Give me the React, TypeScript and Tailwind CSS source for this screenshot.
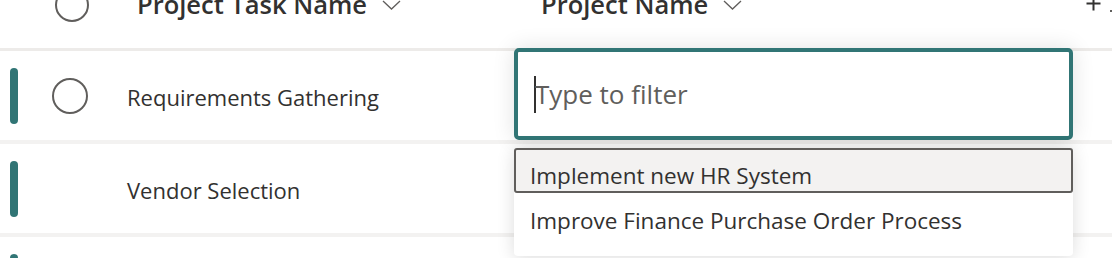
import React from 'react'

const font = { fontFamily: '"Open Sans", "Noto Sans", sans-serif' }

function Chevron({ className }: { className?: string }) {
  return (
    <svg width="19" height="10" viewBox="0 0 19 10" className={className}>
      <polyline points="1,1 9.5,9 18,1" fill="none" stroke="#605e5c" strokeWidth="1.3" />
    </svg>
  )
}

function Circle({ size }: { size: number }) {
  return (
    <span
      className="block shrink-0 rounded-full border-[2px] border-[#605e5c]"
      style={{ width: size, height: size }}
    />
  )
}

const rows = [
  { name: 'Requirements Gathering', selected: true },
  { name: 'Vendor Selection', selected: false },
  { name: '', selected: false },
]

export default function App() {
  return (
    <div className="relative w-[1112px] h-[258px] overflow-hidden bg-white text-[#323130]" style={font}>
      <div className="-mt-[38px]">
        {/* header */}
        <div className="flex items-center h-[86px]">
          <div className="w-[55px] shrink-0" />
          <Circle size={34} />
          <div className="flex items-center w-[452px] shrink-0 pl-[48px] gap-[15px]">
            <span className="text-[25.5px] font-semibold leading-none whitespace-nowrap">Project Task Name</span>
            <Chevron />
          </div>
          <div className="flex items-center gap-[15px]">
            <span className="text-[25.5px] font-semibold leading-none whitespace-nowrap">Project Name</span>
            <Chevron />
          </div>
          <div className="flex-1" />
          <div className="flex items-center gap-[9px]">
            <svg width="15" height="15" viewBox="0 0 15 15" className="-mt-[4px]">
              <path d="M7.5 0.5v14M0.5 7.5h14" stroke="#323130" strokeWidth="2" />
            </svg>
            <span className="w-[2px] h-[2px] mt-[12px] bg-[#605e5c]" />
          </div>
        </div>
        <div className="h-[3px] bg-[#edebe9]" />

        {rows.map((r, i) => (
          <div key={i}>
            <div className="flex items-center h-[89px]">
              <div className="w-[52px] shrink-0 pl-[10px]">
                <span className="block w-[8px] h-[56px] rounded-full bg-[#317575]" />
              </div>
              <div className="w-[36px] shrink-0">{r.selected && <Circle size={36} />}</div>
              <span className="ml-[39px] mt-[3px] text-[22px] whitespace-nowrap">{r.name}</span>
            </div>
            <div className="h-[4px] bg-[#f3f2f1]" />
          </div>
        ))}
      </div>

      {/* filter callout */}
      <div className="absolute top-[48px] left-[514px] w-[559px]">
        <div className="flex items-center h-[92px] rounded-[5px] border-[4px] border-[#317575] bg-white pl-[16px] shadow-[0_0_22px_rgba(0,0,0,0.12)]">
          <span className="w-[2px] h-[37px] bg-[#323130] -mr-[1px]" />
          <span className="mt-[1px] text-[26px] text-[#605e5c] whitespace-nowrap">Type to filter</span>
        </div>
        <div className="mt-[8px] rounded-[4px] bg-white pb-[7px] shadow-[0_2px_18px_rgba(0,0,0,0.14)]">
          <div className="flex items-center h-[45px] pt-[11px] pl-[14px] rounded-[3px] border-[2px] border-[#605e5c] bg-[#f3f2f1]">
            <span className="text-[22.5px] whitespace-nowrap">Implement new HR System</span>
          </div>
          <div className="flex items-center h-[56px] pl-[16px]">
            <span className="text-[22.5px] whitespace-nowrap">Improve Finance Purchase Order Process</span>
          </div>
        </div>
      </div>
    </div>
  )
}
